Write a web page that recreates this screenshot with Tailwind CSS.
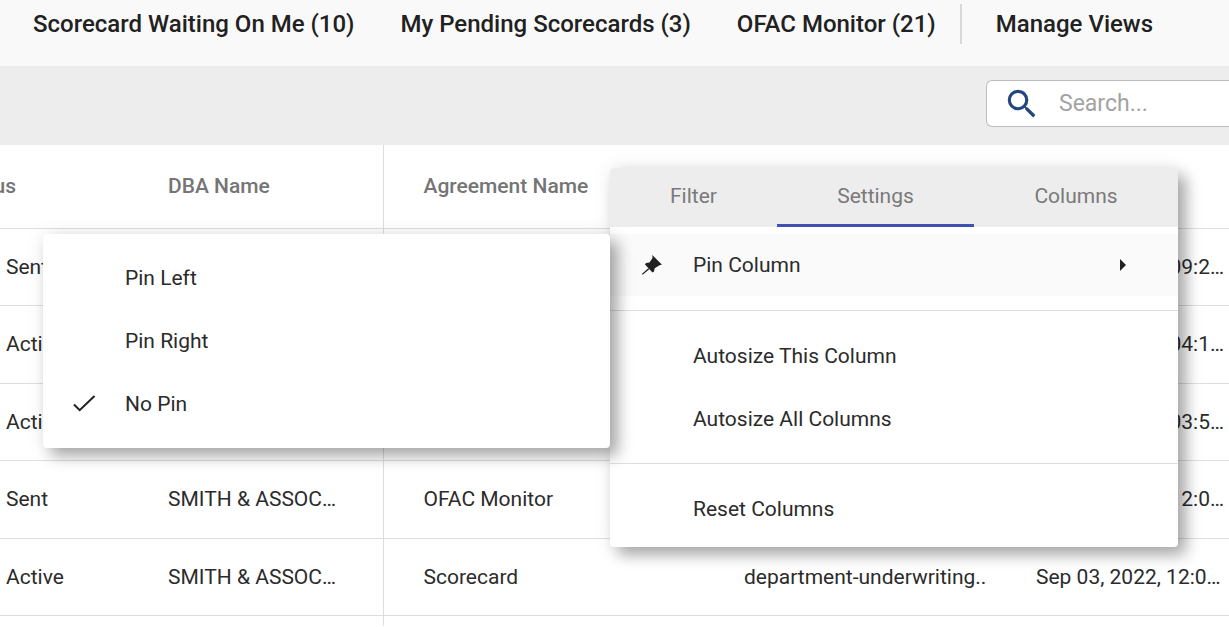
<!DOCTYPE html>
<html lang="en">

<head>
    <meta charset="UTF-8">
    <meta name="viewport" content="width=device-width, initial-scale=1.0">
    <title>Scorecards</title>
    <script src="https://cdn.jsdelivr.net/npm/@tailwindcss/browser@4"></script>
</head>

<body class="relative min-h-screen overflow-x-hidden bg-white font-['Roboto',sans-serif] text-[21px] leading-6 text-[#2b2b2b]">
    <nav class="flex h-[66px] items-start bg-[#f9f9f9] pt-1 pl-[33px] text-2xl font-medium whitespace-nowrap text-[#212121]">
        <a href="#" class="mr-[46px] py-1">Scorecard Waiting On Me (10)</a>
        <a href="#" class="mr-[46px] py-1">My Pending Scorecards (3)</a>
        <a href="#" class="mr-6 py-1">OFAC Monitor (21)</a>
        <a href="#" class="border-l-2 border-[#d8d8d8] py-1 pl-[34px]">Manage Views</a>
    </nav>

    <div class="flex h-[79px] justify-end bg-[#ededed] pt-[14px]">
        <label class="flex h-[47px] w-[243px] items-center rounded-l-md border border-r-0 border-[#bdbdbd] bg-white pl-4">
            <svg class="size-[38px] shrink-0 fill-[#23467f]" viewBox="0 0 24 24" aria-hidden="true">
                <path d="M15.5 14h-.79l-.28-.27A6.47 6.47 0 0 0 16 9.5 6.5 6.5 0 1 0 9.5 16c1.61 0 3.09-.59 4.23-1.57l.27.28v.79l5 4.99L20.49 19l-4.99-5zm-6 0C7.01 14 5 11.99 5 9.5S7.01 5 9.5 5 14 7.01 14 9.5 11.99 14 9.5 14z" />
            </svg>
            <input type="text" placeholder="Search..." aria-label="Search" class="ml-[18px] w-full min-w-0 text-[23px] outline-none placeholder:text-[#a3a3a3]">
        </label>
    </div>

    <table class="w-full table-fixed border-collapse text-left whitespace-nowrap">
        <colgroup>
            <col class="w-32">
            <col class="w-[255px]">
            <col class="w-[321px]">
            <col class="w-[292px]">
            <col>
        </colgroup>
        <thead>
            <tr class="h-[83px] border-b border-[#dedede] text-[#757575]">
                <th class="font-medium"><div class="flex w-4 justify-end overflow-hidden">Status</div></th>
                <th class="border-r border-[#dedede] pl-10 font-medium">DBA Name</th>
                <th class="pl-10 font-medium">Agreement Name</th>
                <th></th>
                <th></th>
            </tr>
        </thead>
        <tbody>
            <tr class="h-[77px] border-b border-[#dedede]">
                <td class="pl-1.5">Sent</td>
                <td class="border-r border-[#dedede] pl-10"></td>
                <td class="pl-10"></td>
                <td class="pl-10"></td>
                <td class="pr-[5px] text-right">09:2…</td>
            </tr>
            <tr class="h-[78px] border-b border-[#dedede]">
                <td class="pl-1.5">Active</td>
                <td class="border-r border-[#dedede] pl-10"></td>
                <td class="pl-10"></td>
                <td class="pl-10"></td>
                <td class="pr-[5px] text-right">04:1…</td>
            </tr>
            <tr class="h-[77px] border-b border-[#dedede]">
                <td class="pl-1.5">Active</td>
                <td class="border-r border-[#dedede] pl-10"></td>
                <td class="pl-10"></td>
                <td class="pl-10"></td>
                <td class="pr-[5px] text-right">03:5…</td>
            </tr>
            <tr class="h-[78px] border-b border-[#dedede]">
                <td class="pl-1.5">Sent</td>
                <td class="border-r border-[#dedede] pl-10">SMITH &amp; ASSOC…</td>
                <td class="pl-10">OFAC Monitor</td>
                <td class="pl-10"></td>
                <td class="pr-[5px] text-right">12:0…</td>
            </tr>
            <tr class="h-[77px] border-b border-[#dedede]">
                <td class="pl-1.5">Active</td>
                <td class="border-r border-[#dedede] pl-10">SMITH &amp; ASSOC…</td>
                <td class="pl-10">Scorecard</td>
                <td class="pl-10">department-underwriting..</td>
                <td class="pl-10">Sep 03, 2022, 12:0…</td>
            </tr>
            <tr class="h-[11px]">
                <td></td>
                <td class="border-r border-[#dedede]"></td>
                <td></td>
                <td></td>
                <td></td>
            </tr>
        </tbody>
    </table>

    <!-- column menu -->
    <div class="absolute top-[168px] left-[610px] w-[568px] rounded bg-white pb-[7px] shadow-[8px_8px_15px_rgba(0,0,0,0.32),0_0_20px_rgba(0,0,0,0.08)]">
        <div class="mb-[7px] flex h-[59px] rounded-t bg-[#ededed] text-[#7a7a7a]" role="tablist">
            <button type="button" role="tab" class="w-[167px] border-b-3 border-transparent">Filter</button>
            <button type="button" role="tab" aria-selected="true" class="w-[197px] border-b-3 border-[#3f51b5]">Settings</button>
            <button type="button" role="tab" class="flex-1 border-b-3 border-transparent">Columns</button>
        </div>
        <button type="button" class="flex h-[62px] w-full items-center bg-[#fafafa] pr-[51px] pl-[30px]">
            <svg class="mr-[29px] size-6 fill-[#212121]" viewBox="0 0 24 24" aria-hidden="true">
                <path d="M12.300 2 22 11.700l-2 .3-5.300 3.200-.700 3.200-1.500 1L5 11.500 6 10l3.500-.500L12.500 5zM8.200 15.200l1 1-6.500 5.500-.8-.6z" />
            </svg>
            <span>Pin Column</span>
            <svg class="ml-auto h-3 w-2 fill-[#212121]" viewBox="0 0 8 12" aria-hidden="true"><path d="M1 0v12l6-6z" /></svg>
        </button>
        <hr class="mt-[14px] mb-[13px] border-[#dedede]">
        <button type="button" class="flex h-[63px] w-full items-center pl-[83px]">Autosize This Column</button>
        <button type="button" class="flex h-[63px] w-full items-center pl-[83px]">Autosize All Columns</button>
        <hr class="my-[13px] border-[#dedede]">
        <button type="button" class="flex h-[63px] w-full items-center pl-[83px]">Reset Columns</button>
    </div>

    <!-- pin submenu -->
    <div class="absolute top-[234px] left-[43px] w-[567px] rounded bg-white pt-3 pb-[13px] shadow-[8px_8px_15px_rgba(0,0,0,0.32),0_0_20px_rgba(0,0,0,0.08)]">
        <button type="button" class="flex h-[63px] w-full items-center pl-[82px]">Pin Left</button>
        <button type="button" class="flex h-[63px] w-full items-center pl-[82px]">Pin Right</button>
        <button type="button" class="flex h-[63px] w-full items-center pl-[29px]">
            <svg class="mr-[29px] size-6 fill-none stroke-[#212121] stroke-2" viewBox="0 0 24 24" aria-hidden="true"><path d="m2 12.500 5.700 5.700L22.500 4" /></svg>
            <span>No Pin</span>
        </button>
    </div>
</body>

</html>
